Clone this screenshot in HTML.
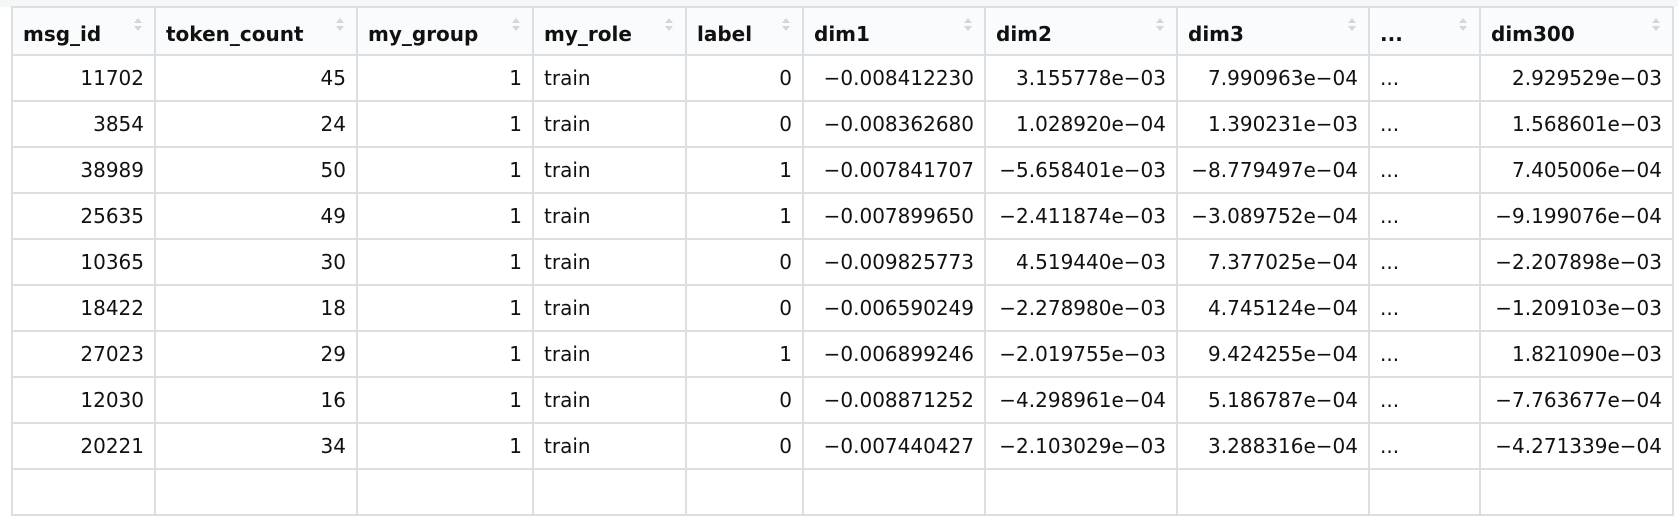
<!DOCTYPE html>
<html><head><meta charset="utf-8"><style>
html,body{margin:0;padding:0;background:#fff;width:1678px;height:476px;overflow:hidden;font-family:"DejaVu Sans","Liberation Sans",sans-serif;}
.top{position:absolute;left:0;top:0;width:1678px;height:7px;background:#f5f6f7;}
table{position:absolute;left:11px;top:6px;border-collapse:collapse;table-layout:fixed;width:1661px;}
td,th{border:2px solid #dcdfe2;padding:0 10px;font-size:20px;color:#111;white-space:nowrap;overflow:hidden;box-sizing:border-box;}
th{height:48px;text-align:left;font-weight:bold;background:#fafbfc;position:relative;padding-top:6px;}
td{height:46px;text-align:right;}
td.l{text-align:left;}
.s{position:absolute;right:12px;top:9px;width:8px;height:16px;}
</style></head><body>
<div class="top"></div>
<table>
<colgroup><col style="width:143px"><col style="width:202px"><col style="width:176px"><col style="width:153px"><col style="width:117px"><col style="width:182px"><col style="width:192px"><col style="width:192px"><col style="width:111px"><col style="width:193px"></colgroup>
<tr>
<th>msg_id<svg class="s" viewBox="0 0 8 16"><path d="M0 6L4 1L8 6Z M0 9L4 14L8 9Z" fill="#d4d7da"/></svg></th>
<th>token_count<svg class="s" viewBox="0 0 8 16"><path d="M0 6L4 1L8 6Z M0 9L4 14L8 9Z" fill="#d4d7da"/></svg></th>
<th>my_group<svg class="s" viewBox="0 0 8 16"><path d="M0 6L4 1L8 6Z M0 9L4 14L8 9Z" fill="#d4d7da"/></svg></th>
<th>my_role<svg class="s" viewBox="0 0 8 16"><path d="M0 6L4 1L8 6Z M0 9L4 14L8 9Z" fill="#d4d7da"/></svg></th>
<th>label<svg class="s" viewBox="0 0 8 16"><path d="M0 6L4 1L8 6Z M0 9L4 14L8 9Z" fill="#d4d7da"/></svg></th>
<th>dim1<svg class="s" viewBox="0 0 8 16"><path d="M0 6L4 1L8 6Z M0 9L4 14L8 9Z" fill="#d4d7da"/></svg></th>
<th>dim2<svg class="s" viewBox="0 0 8 16"><path d="M0 6L4 1L8 6Z M0 9L4 14L8 9Z" fill="#d4d7da"/></svg></th>
<th>dim3<svg class="s" viewBox="0 0 8 16"><path d="M0 6L4 1L8 6Z M0 9L4 14L8 9Z" fill="#d4d7da"/></svg></th>
<th>...<svg class="s" viewBox="0 0 8 16"><path d="M0 6L4 1L8 6Z M0 9L4 14L8 9Z" fill="#d4d7da"/></svg></th>
<th>dim300<svg class="s" viewBox="0 0 8 16"><path d="M0 6L4 1L8 6Z M0 9L4 14L8 9Z" fill="#d4d7da"/></svg></th>
</tr>
<tr><td>11702</td><td>45</td><td>1</td><td class="l">train</td><td>0</td><td>−0.008412230</td><td>3.155778e−03</td><td>7.990963e−04</td><td class="l">...</td><td>2.929529e−03</td></tr>
<tr><td>3854</td><td>24</td><td>1</td><td class="l">train</td><td>0</td><td>−0.008362680</td><td>1.028920e−04</td><td>1.390231e−03</td><td class="l">...</td><td>1.568601e−03</td></tr>
<tr><td>38989</td><td>50</td><td>1</td><td class="l">train</td><td>1</td><td>−0.007841707</td><td>−5.658401e−03</td><td>−8.779497e−04</td><td class="l">...</td><td>7.405006e−04</td></tr>
<tr><td>25635</td><td>49</td><td>1</td><td class="l">train</td><td>1</td><td>−0.007899650</td><td>−2.411874e−03</td><td>−3.089752e−04</td><td class="l">...</td><td>−9.199076e−04</td></tr>
<tr><td>10365</td><td>30</td><td>1</td><td class="l">train</td><td>0</td><td>−0.009825773</td><td>4.519440e−03</td><td>7.377025e−04</td><td class="l">...</td><td>−2.207898e−03</td></tr>
<tr><td>18422</td><td>18</td><td>1</td><td class="l">train</td><td>0</td><td>−0.006590249</td><td>−2.278980e−03</td><td>4.745124e−04</td><td class="l">...</td><td>−1.209103e−03</td></tr>
<tr><td>27023</td><td>29</td><td>1</td><td class="l">train</td><td>1</td><td>−0.006899246</td><td>−2.019755e−03</td><td>9.424255e−04</td><td class="l">...</td><td>1.821090e−03</td></tr>
<tr><td>12030</td><td>16</td><td>1</td><td class="l">train</td><td>0</td><td>−0.008871252</td><td>−4.298961e−04</td><td>5.186787e−04</td><td class="l">...</td><td>−7.763677e−04</td></tr>
<tr><td>20221</td><td>34</td><td>1</td><td class="l">train</td><td>0</td><td>−0.007440427</td><td>−2.103029e−03</td><td>3.288316e−04</td><td class="l">...</td><td>−4.271339e−04</td></tr>
<tr><td></td><td></td><td></td><td></td><td></td><td></td><td></td><td></td><td></td><td></td></tr>
</table>
</body></html>
